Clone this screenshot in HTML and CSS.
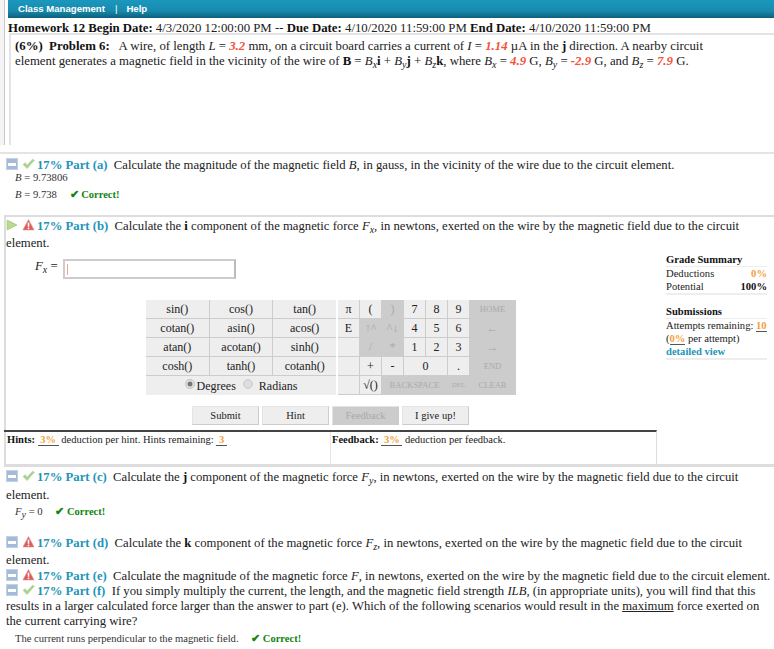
FILE: index.html
```html
<!DOCTYPE html>
<html lang="en">
<head>
<meta charset="utf-8">
<title>Homework 12</title>
<link rel="stylesheet" href="styles.css">
</head>
<body>
<svg class="defs" width="0" height="0" aria-hidden="true">
  <symbol id="ic-minus" viewBox="0 0 12 12"><rect x="0.5" y="0.5" width="11" height="11" fill="#a3bbd8" stroke="#c3d3e6"/><rect x="2" y="5" width="8" height="3" fill="#fff"/></symbol>
  <symbol id="ic-check" viewBox="0 0 14 12"><path d="M1 6.5 L3.5 4.5 L5.5 7 L11.5 0.5 L13.5 2 L5.5 11 Z" fill="#a9d18e" stroke="#c4dfb2" stroke-width=".6"/></symbol>
  <symbol id="ic-warn" viewBox="0 0 12 12"><path d="M6 .5 L11.6 11 H.4 Z" fill="#dc5a5a" stroke="#e89a9a" stroke-width=".6"/><rect x="5.2" y="3.6" width="1.6" height="4.2" fill="#fff"/><rect x="5.2" y="8.6" width="1.6" height="1.5" fill="#fff"/></symbol>
  <symbol id="ic-play" viewBox="0 0 10 10"><path d="M1 1 L9 5 L1 9 Z" fill="#bcd98f" stroke="#a5c878" stroke-width=".8"/></symbol>
</svg>
<div class="top">
  <nav class="nav"><a>Class Management</a><span class="sep">|</span><a>Help</a></nav>
  <div class="dates"><b>Homework 12 Begin Date:</b> 4/3/2020 12:00:00 PM -- <b>Due Date:</b> 4/10/2020 11:59:00 PM <b>End Date:</b> 4/10/2020 11:59:00 PM</div>
  <div class="problem">
    <b>(6%)&nbsp; Problem 6:</b>&nbsp;&nbsp; A wire, of length <i>L</i> = <i class="val">3.2</i> mm, on a circuit board carries a current of <i>I</i> = <i class="val">1.14</i> µA in the <b>j</b> direction. A nearby circuit<br>
    element generates a magnetic field in the vicinity of the wire of <b>B</b> = <i>B<sub>x</sub></i><b>i</b> + <i>B<sub>y</sub></i><b>j</b> + <i>B<sub>z</sub></i><b>k</b>, where <i>B<sub>x</sub></i> = <i class="val">4.9</i> G, <i>B<sub>y</sub></i> = <i class="val">-2.9</i> G, and <i>B<sub>z</sub></i> = <i class="val">7.9</i> G.
  </div>
</div>

<section class="part part-a">
  <div class="qline"><svg class="ic"><use href="#ic-minus"/></svg><svg class="ic2"><use href="#ic-check"/></svg><b class="pct">17% Part (a)</b>&nbsp; Calculate the magnitude of the magnetic field <i>B</i>, in gauss, in the vicinity of the wire due to the circuit element.</div>
  <div class="ans"><i>B</i> = 9.73806</div>
  <div class="ans"><i>B</i> = 9.738 <span class="ok">✔ Correct!</span></div>
</section>

<section class="part part-b">
  <div class="qline"><svg class="ic"><use href="#ic-play"/></svg><svg class="ic2"><use href="#ic-warn"/></svg><b class="pct">17% Part (b)</b>&nbsp; Calculate the <b>i</b> component of the magnetic force <i>F<sub>x</sub></i>, in newtons, exerted on the wire by the magnetic field due to the circuit<br>element.</div>
  <div class="work">
    <div class="solve">
      <div class="entry"><span class="lbl"><i>F<sub>x</sub></i> =</span><div class="field"><span class="caret"></span></div></div>
      <div class="calc">
        <div class="funcs">
          <span>sin()</span><span>cos()</span><span>tan()</span>
          <span>cotan()</span><span>asin()</span><span>acos()</span>
          <span>atan()</span><span>acotan()</span><span>sinh()</span>
          <span>cosh()</span><span>tanh()</span><span>cotanh()</span>
          <div class="radios"><span class="radio on"></span>Degrees<span class="radio"></span>Radians</div>
        </div>
        <div class="keys">
          <span>π</span><span>(</span><span class="off">)</span><span>7</span><span>8</span><span>9</span><span class="off sm">HOME</span>
          <span>E</span><span class="off">↑^</span><span class="off">^↓</span><span>4</span><span>5</span><span>6</span><span class="off">←</span>
          <span></span><span class="off">/</span><span class="off">*</span><span>1</span><span>2</span><span>3</span><span class="off">→</span>
          <span></span><span>+</span><span>-</span><span class="w2">0</span><span>.</span><span class="off sm">END</span>
          <span></span><span>√()</span><span class="off sm w3">BACKSPACE</span><span class="off xs">DEL</span><span class="off sm">CLEAR</span>
        </div>
      </div>
      <div class="buttons"><button>Submit</button><button>Hint</button><button class="dis">Feedback</button><button>I give up!</button></div>
    </div>
    <aside class="side">
      <h4>Grade Summary</h4>
      <div class="rows"><div class="row"><span>Deductions</span><b class="orange">0%</b></div><div class="row"><span>Potential</span><b>100%</b></div></div>
      <h4 class="sub2">Submissions</h4>
      <div class="rows"><div class="row"><span>Attempts remaining: <b class="orange und">10</b></span></div><div>(<b class="orange und">0%</b> per attempt)</div><b class="teal">detailed view</b></div>
    </aside>
  </div>
  <div class="hints">
    <div class="hint-l"><b>Hints:</b> <b class="orange und">&nbsp;3%&nbsp;</b> deduction per hint. Hints remaining: <b class="orange und">&nbsp;3&nbsp;</b></div>
    <div class="hint-r"><b>Feedback:</b> <b class="orange und">&nbsp;3%&nbsp;</b> deduction per feedback.</div>
  </div>
</section>

<section class="part part-c">
  <div class="qline"><svg class="ic"><use href="#ic-minus"/></svg><svg class="ic2"><use href="#ic-check"/></svg><b class="pct">17% Part (c)</b>&nbsp; Calculate the <b>j</b> component of the magnetic force <i>F<sub>y</sub></i>, in newtons, exerted on the wire by the magnetic field due to the circuit<br>element.</div>
  <div class="ans"><i>F<sub>y</sub></i> = 0 <span class="ok">✔ Correct!</span></div>
</section>

<section class="part part-d">
  <div class="qline"><svg class="ic"><use href="#ic-minus"/></svg><svg class="ic2"><use href="#ic-warn"/></svg><b class="pct">17% Part (d)</b>&nbsp; Calculate the <b>k</b> component of the magnetic force <i>F<sub>z</sub></i>, in newtons, exerted on the wire by the magnetic field due to the circuit<br>element.</div>
</section>
<section class="part part-e">
  <div class="qline"><svg class="ic"><use href="#ic-minus"/></svg><svg class="ic2"><use href="#ic-warn"/></svg><b class="pct">17% Part (e)</b>&nbsp; Calculate the magnitude of the magnetic force <i>F</i>, in newtons, exerted on the wire by the magnetic field due to the circuit element.</div>
</section>
<section class="part part-f">
  <div class="qline"><svg class="ic"><use href="#ic-minus"/></svg><svg class="ic2"><use href="#ic-check"/></svg><b class="pct">17% Part (f)</b>&nbsp; If you simply multiply the current, the length, and the magnetic field strength <i>ILB</i>, (in appropriate units), you will find that this<br>results in a larger calculated force larger than the answer to part (e). Which of the following scenarios would result in the <u>maximum</u> force exerted on<br>the current carrying wire?</div>
  <div class="ans">The current runs perpendicular to the magnetic field. <span class="ok">✔ Correct!</span></div>
</section>
</body>
</html>
```
FILE: styles.css
```css
* { box-sizing: border-box; }
html, body { margin: 0; padding: 0; height: 649px; overflow: hidden; background: #fff; }
body { font-family: "Liberation Serif", "Times New Roman", serif; font-size: 12.8px; line-height: 15px; color: #222; white-space: nowrap; }
.defs { position: absolute; }
sub { font-size: 10px; line-height: 0; vertical-align: -3px; }
b { color: #111; }

.top { height: 145px; margin-left: 4px; padding-left: 3px; border-left: 1px solid #c8c8c8; box-shadow: -4px 0 0 #f4f4f4; }
.nav { height: 18px; display: flex; align-items: center; padding-left: 10px; background: linear-gradient(#1b97bd, #188bae 60%, #0f5f7b); color: #fff; font: bold 9.6px/18px "Liberation Sans", Arial, sans-serif; }
.sep { margin: 0 9px 0 10px; font-weight: normal; }
.dates { height: 14px; margin-top: 1px; line-height: 16px; padding-top: 1px; }
.problem { height: 112px; margin-left: 1px; padding: 4px 0 0 4px; border-top: 2px solid #e4e4e4; border-left: 2px solid #e4e4e4; }
.val { color: #f4523b; font-weight: bold; }

.part { padding-left: 6px; }
.qline { font-size: 12.7px; line-height: 15px; }
.part-a { height: 63px; margin-top: 7px; border-top: 2px solid #e4e4e4; padding-top: 4px; }
.part-a .qline { height: 11px; line-height: 15px; }
.ic { width: 12px; height: 12px; margin-right: 4px; vertical-align: -1px; }
.ic2 { width: 13px; height: 12px; margin-right: 2px; vertical-align: -1px; }
.pct { color: #2394b8; }
.ans { font-size: 10.7px; line-height: 15px; margin-left: 9px; color: #333; }
.ok { margin-left: 10px; color: #118511; font-weight: bold; font-size: 10.5px; }
.part-a .ans { height: 16.5px; line-height: 16.5px; }

.part-b { height: 252px; margin-left: 4px; padding: 1px 0 0 0; border-top: 2px solid #ddd; border-left: 2px solid #ddd; border-bottom: 3px solid #ddd; }
.part-b .qline { line-height: 17px; height: 34px; }
.work { display: flex; height: 178px; padding-top: 7px; }
.solve { width: 652px; flex: none; }
.entry { display: flex; align-items: flex-start; height: 41px; padding-left: 29px; }
.lbl { width: 28px; line-height: 14px; }
.field { width: 173px; height: 20px; border: 2px solid #ccc; border-right-color: #bbb; background: #fff; padding: 3px 0 0 2px; }
.caret { display: block; width: 1px; height: 11px; background: #f4a08f; }

.calc { display: flex; gap: 2px; margin-left: 140px; height: 95px; font-size: 12px; line-height: 18px; }
.funcs { width: 190px; display: grid; grid-template-columns: repeat(3, 1fr); grid-auto-rows: 18px; gap: 1px; background: #ccc; }
.funcs span { background: #eee; text-align: center; line-height: 18px; }
.radios { grid-column: 1 / 4; background: #eee; display: flex; align-items: center; justify-content: center; line-height: 18px; height: 19px; }
.funcs .radio { width: 10px; height: 10px; border-radius: 50%; background: #ddd; border: 1px solid #ccc; margin: 0 6px 3px 7px; }
.funcs .radio.on { background: #777; box-shadow: inset 0 0 0 1.5px #e8e8e8; margin: 0 2px 3px 0; }
.keys { width: 178px; display: grid; grid-template-columns: repeat(6, 21px) 45px; grid-auto-rows: 18px; gap: 1px; background: #ccc; }
.keys span { background: #eee; text-align: center; line-height: 18px; }
.keys .off { background: #ccc; color: #aaa; }
.keys .sm { font-size: 8.6px; }
.keys .xs { font-size: 7px; }
.keys .w2 { grid-column: span 2; }
.keys .w3 { grid-column: span 3; }

.buttons { display: flex; gap: 3px; margin: 11px 0 0 186px; }
.buttons button { width: 67px; height: 19px; padding: 0; border: 1px solid #e4e4e4; border-right-color: #ccc; border-bottom-color: #ccc; background: #eee; font: 10.5px/17px "Liberation Serif", serif; color: #222; }
.buttons .dis { background: #ccc; color: #aaa; }

.side { font-size: 10.6px; line-height: 13px; width: 101px; margin-left: 8px; margin-top: -6px; }
.side h4 { margin: 0; font-size: 10.6px; line-height: 13px; color: #111; border-bottom: 1px solid #eee; }
.side .sub2 { margin-top: 10px; }
.rows { border-bottom: 2px solid #eee; }
.row { display: flex; justify-content: space-between; }
.orange { color: #f5a03a; }
.und { border-bottom: 1px solid #555; }
.teal { color: #2394b8; }

.hints { display: flex; width: 653px; height: 34px; margin-left: -2px; padding: 1px 0 0 3px; border-top: 2px solid #444; border-right: 1px solid #ddd; font-size: 10.5px; line-height: 13px; }
.hint-l { width: 324px; margin-top: -1px; padding-top: 1px; border-right: 1px solid #e4e4e4; }
.hint-r { padding-left: 1px; }

.part-c { height: 55px; padding-top: 1px; }
.part-c .qline { line-height: 18px; }
.part-d { height: 34px; margin-top: 13px; }
.part-d .qline { line-height: 17px; }
.part-e { height: 15px; }
.part-f .ans { margin-top: 2px; font-size: 10.6px; }
```
